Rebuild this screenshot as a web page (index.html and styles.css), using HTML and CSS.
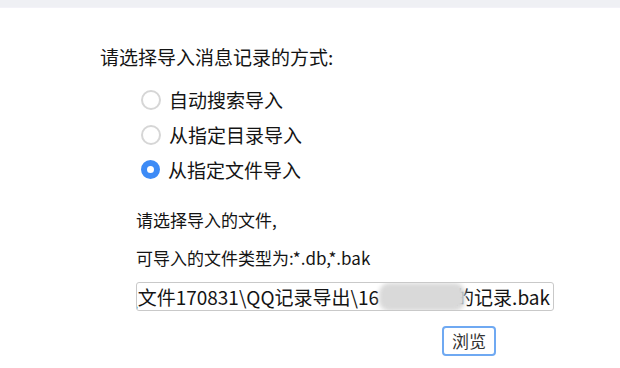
FILE: index.html
```html
<!DOCTYPE html>
<html lang="zh-CN">
<head>
<meta charset="utf-8">
<title>导入消息记录</title>
<link rel="stylesheet" href="styles.css">
</head>
<body>
<div class="topbar"></div>
<div class="content">
  <div class="title">请选择导入消息记录的方式:</div>
  <div class="options">
    <div class="option"><span class="radio"></span><span>自动搜索导入</span></div>
    <div class="option"><span class="radio"></span><span>从指定目录导入</span></div>
    <div class="option"><span class="radio checked"></span><span>从指定文件导入</span></div>
  </div>
  <div class="filebox">
    <div class="hint">请选择导入的文件,</div>
    <div class="hint">可导入的文件类型为:*.db,*.bak</div>
    <div class="path"><span class="path-text">D:\新建文件夹\文件170831\QQ记录导出\16<span class="blur"></span>的记录.bak</span></div>
    <div class="actions"><span class="btn">浏览</span></div>
  </div>
</div>
</body>
</html>
```
FILE: styles.css
```css
html, body {
  margin: 0;
  padding: 0;
  background: #ffffff;
}
body {
  width: 620px;
  height: 368px;
  overflow: hidden;
  font-family: "Noto Sans CJK SC", "Noto Sans", sans-serif;
  color: #141414;
}
.topbar {
  height: 7px;
  background: #eff0f4;
  border-bottom: 1px solid #f3f2f8;
}
.content {
  padding: 37px 0 0 100px;
}
.title {
  font-size: 19px;
  line-height: 24px;
}
.options {
  margin-top: 13px;
  padding-left: 41px;
}
.option {
  display: flex;
  align-items: center;
  height: 35px;
  font-size: 19px;
  gap: 8px;
}
.radio {
  width: 16px;
  height: 16px;
  border: 2px solid #d6d6d6;
  border-radius: 50%;
  box-sizing: content-box;
  background: #fff;
}
.radio.checked {
  width: 7px;
  height: 7px;
  border: 6.5px solid #3d8bf6;
}
.filebox {
  margin-top: 14px;
  padding-left: 36px;
}
.hint {
  font-size: 17px;
  line-height: 38px;
}
.path {
  margin-top: 5px;
  width: 413px;
  height: 27px;
  border: 1px solid #c9c9c9;
  border-radius: 3px;
  display: flex;
  justify-content: flex-end;
  align-items: center;
  overflow: hidden;
  padding: 0 3px 0 0;
  box-sizing: content-box;
  font-size: 19px;
  white-space: nowrap;
}
.path-text {
  display: flex;
  align-items: center;
  flex-shrink: 0;
}
.blur {
  position: relative;
  z-index: 1;
  display: inline-block;
  width: 86px;
  height: 28px;
  margin: 0 -10px 0 0;
  background: #d9d9d9;
  border-radius: 10px;
  filter: blur(2px);
}
.actions {
  display: flex;
  padding-left: 306px;
  margin-top: 15px;
}
.btn {
  width: 50px;
  height: 26px;
  border: 2px solid #6fa9f2;
  border-radius: 4px;
  font-size: 17px;
  line-height: 26px;
  text-align: center;
  color: #333;
}
```
